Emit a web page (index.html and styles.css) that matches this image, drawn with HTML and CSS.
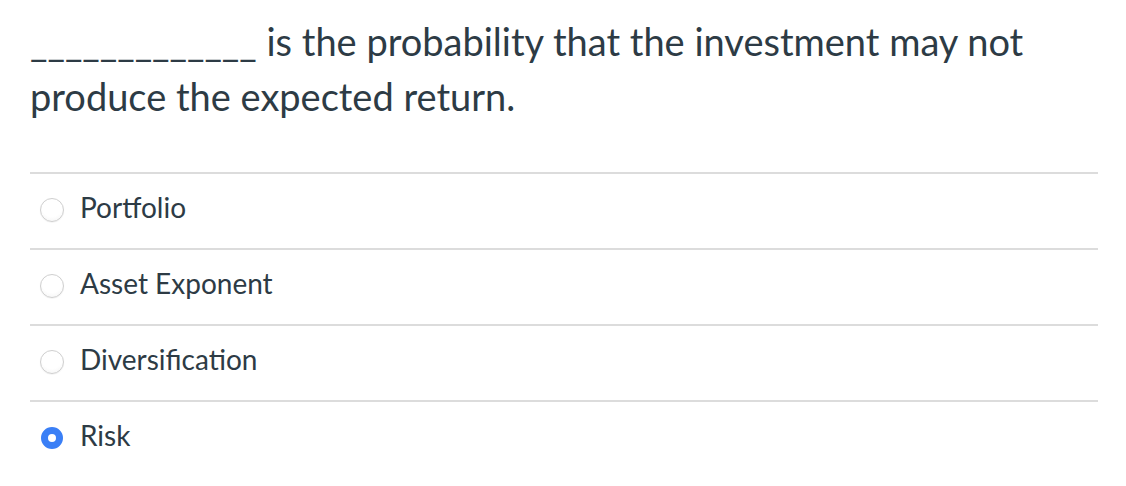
FILE: index.html
```html
<!DOCTYPE html>
<html>
<head>
<meta charset="utf-8">
<link rel="stylesheet" href="styles.css">
</head>
<body>
<div class="quiz">
  <div class="question">_____________ is the probability that the investment may not produce the expected return.</div>
  <div class="answers">
    <label class="answer"><input type="radio" name="a" class="radio"><span class="label">Portfolio</span></label>
    <label class="answer"><input type="radio" name="a" class="radio"><span class="label">Asset Exponent</span></label>
    <label class="answer"><input type="radio" name="a" class="radio"><span class="label">Diversification</span></label>
    <label class="answer"><input type="radio" name="a" class="radio" checked><span class="label">Risk</span></label>
  </div>
</div>
</body>
</html>
```

FILE: styles.css
```css
html, body {
  margin: 0;
  padding: 0;
  background: #ffffff;
}

body {
  font-family: Lato, "Liberation Sans", sans-serif;
  color: #2d3b45;
}

.quiz {
  padding: 14px 28px 0 30px;
}

.question {
  font-size: 38px;
  line-height: 55px;
  width: 1010px;
  margin-bottom: 48px;
}

.answers {
  display: flex;
  flex-direction: column;
}

.answer {
  display: flex;
  align-items: center;
  gap: 16px;
  border-top: 2px solid #dcdcdc;
  height: 74px;
  padding-left: 10px;
  box-sizing: content-box;
}

.radio {
  appearance: none;
  -webkit-appearance: none;
  margin: 0;
  width: 24px;
  height: 24px;
  border-radius: 50%;
  border: 1px solid #cfcfcf;
  background: radial-gradient(circle at 50% 35%, #ffffff 55%, #f1f1f1 100%);
  box-shadow: 0 0.5px 1px rgba(0, 0, 0, 0.08);
  box-sizing: border-box;
  flex: none;
  position: relative;
  top: -1px;
}

.radio:checked {
  width: 22px;
  height: 22px;
  margin-left: 1px;
  margin-right: 1px;
  border: 7px solid #3a7ff6;
  background: #ffffff;
  box-shadow: none;
}

.label {
  font-size: 28px;
  line-height: 30px;
  margin-bottom: 8px;
}
```
